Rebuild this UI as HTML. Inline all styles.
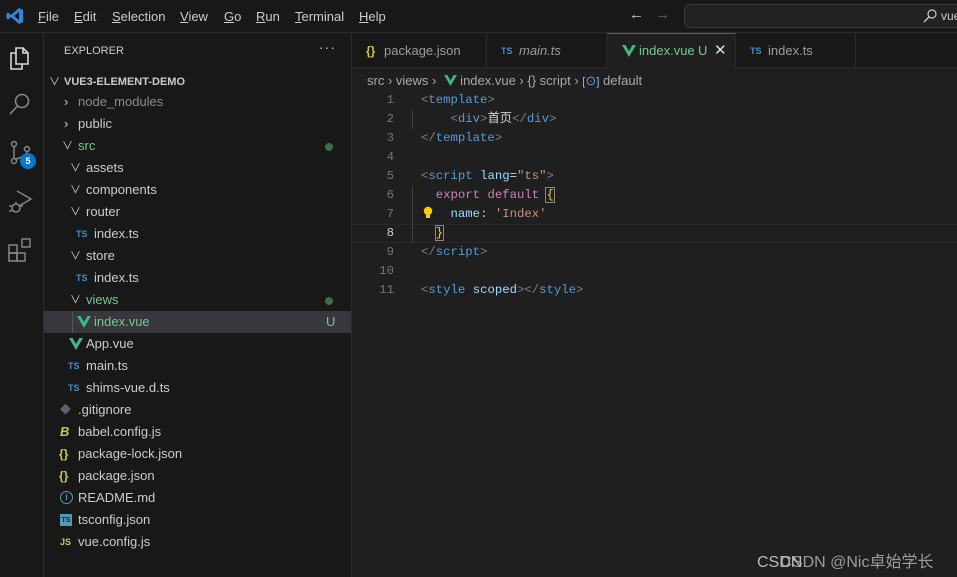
<!DOCTYPE html>
<html><head><meta charset="utf-8"><style>
*{margin:0;padding:0;box-sizing:border-box}
body{width:957px;height:577px;overflow:hidden;background:#1f1f1f;font-family:"Liberation Sans","Noto Sans CJK SC",sans-serif;color:#ccc;position:relative}
.abs{position:absolute}
#title{left:0;top:0;width:957px;height:33px;background:#181818;border-bottom:1px solid #2b2b2b}
.menu{top:9px;font-size:13px;color:#ccc}
#act{left:0;top:33px;width:44px;height:544px;background:#181818;border-right:1px solid #2b2b2b}
#side{left:44px;top:33px;width:308px;height:544px;background:#181818;border-right:1px solid #2b2b2b}
.row{position:absolute;left:0;width:307px;height:22px;font-size:13px;line-height:22px;color:#ccc;white-space:nowrap}
.row span,.row svg{position:absolute}
.chev{color:#ccc;font-size:11px}
.ts{color:#3b8fd0;font-weight:bold;font-size:9px;font-family:"Liberation Sans",sans-serif}
.g{color:#73c991}
#tabs{left:352px;top:33px;width:605px;height:35px;background:#181818;border-bottom:1px solid #2b2b2b}
.tab{position:absolute;top:0;height:35px;border-right:1px solid #2b2b2b;font-size:13px;line-height:36px;color:#9d9d9d}
.code{font-family:"Liberation Mono","Noto Sans CJK SC",monospace;font-size:12.3px;position:absolute;white-space:pre;height:19px;line-height:19px}
.ln{position:absolute;left:352px;width:42px;text-align:right;color:#6e7681;font-family:"Liberation Mono",monospace;font-size:12.3px;line-height:19px}
.t{color:#569cd6}.p{color:#808080}.a{color:#9cdcfe}.s{color:#ce9178}.k{color:#c586c0}.w{color:#d4d4d4}
</style></head><body>
<svg width="0" height="0" style="position:absolute"><defs><symbol id="vue" viewBox="0 0 14 12"><path d="M0 0 H3.5 L7 6 L10.5 0 H14 L7 12 Z" fill="#41b883"/><path d="M3.5 0 H5.5 L7 2.6 L8.5 0 H10.5 L7 6 Z" fill="#35495e" opacity=".0"/></symbol></defs></svg>
<div id="title" class="abs"></div>
<svg class="abs" style="left:6px;top:7px" width="18" height="18" viewBox="0 0 18 18"><path d="M13 1 L17 3 V15 L13 17 L5 10 L2 12.5 L0.5 11.5 V6.5 L2 5.5 L5 8 Z M13 5 L8 9 L13 13 Z" fill="#2a8ad8" fill-rule="evenodd"/></svg>
<div class="abs menu" style="left:38px"><u>F</u>ile</div>
<div class="abs menu" style="left:74px"><u>E</u>dit</div>
<div class="abs menu" style="left:112px"><u>S</u>election</div>
<div class="abs menu" style="left:180px"><u>V</u>iew</div>
<div class="abs menu" style="left:224px"><u>G</u>o</div>
<div class="abs menu" style="left:256px"><u>R</u>un</div>
<div class="abs menu" style="left:295px"><u>T</u>erminal</div>
<div class="abs menu" style="left:359px"><u>H</u>elp</div>
<div class="abs" style="left:629px;top:6px;font-size:15px;color:#ccc">&#8592;</div>
<div class="abs" style="left:655px;top:6px;font-size:15px;color:#666">&#8594;</div>
<div class="abs" style="left:684px;top:4px;width:280px;height:24px;background:#222;border:1px solid #3c3c3c;border-radius:6px"></div>
<svg class="abs" style="left:922px;top:8px" width="16" height="16" viewBox="0 0 16 16"><circle cx="10" cy="6" r="4" stroke="#ccc" stroke-width="1.2" fill="none"/><path d="M7 9 L2 14" stroke="#ccc" stroke-width="1.3"/></svg>
<div class="abs" style="left:941px;top:9px;font-size:12px;color:#ccc">vue</div>

<div id="act" class="abs"></div>
<svg class="abs" style="left:7px;top:45px" width="26" height="26" viewBox="0 0 26 26" fill="none" stroke="#d7d7d7" stroke-width="1.6"><path d="M9 3 H16 L21 8 V19 H9 Z"/><path d="M9 8 H4 V24 H15 V19"/><path d="M16 3 V8 H21"/></svg>
<svg class="abs" style="left:7px;top:91px" width="26" height="26" viewBox="0 0 26 26" fill="none" stroke="#868686" stroke-width="1.6"><circle cx="15" cy="10" r="6.5"/><path d="M10.5 15 L3 23"/></svg>
<svg class="abs" style="left:8px;top:140px" width="24" height="26" viewBox="0 0 24 26" fill="none" stroke="#868686" stroke-width="1.5"><circle cx="6" cy="4" r="2.5"/><circle cx="6" cy="21" r="2.5"/><circle cx="19" cy="9" r="2.5"/><path d="M6 6.5 V18.5 M19 11.5 Q19 16 8 19"/></svg>
<div class="abs" style="left:20px;top:153px;width:16px;height:16px;border-radius:8px;background:#0078d4;color:#fff;font-size:9px;font-weight:bold;text-align:center;line-height:16px">5</div>
<svg class="abs" style="left:7px;top:189px" width="26" height="26" viewBox="0 0 26 26" fill="none" stroke="#868686" stroke-width="1.5"><path d="M10 2 L24 10 L12 17"/><circle cx="9" cy="19" r="4"/><path d="M2 17 H5 M2 22 H5 M13 17 H16 M9 15 V13"/></svg>
<svg class="abs" style="left:7px;top:237px" width="26" height="26" viewBox="0 0 26 26" fill="none" stroke="#868686" stroke-width="1.5"><rect x="2" y="8" width="8" height="8"/><rect x="2" y="16" width="8" height="8"/><rect x="10" y="16" width="8" height="8"/><rect x="15" y="2" width="8" height="8"/></svg>

<div id="side" class="abs">
<div class="abs" style="left:20px;top:12px;font-size:11px;color:#ccc">EXPLORER</div>
<div class="abs" style="left:275px;top:6px;font-size:14px;color:#ccc;letter-spacing:1px">···</div>
<div class="row" style="top:38px"><span class="chev" style="left:5px">&#8744;</span><span style="left:20px;font-size:11px;font-weight:bold">VUE3-ELEMENT-DEMO</span></div>
<div class="row" style="top:58px"><span style="left:20px">&#8250;</span><span style="left:34px;color:#8c8c8c">node_modules</span></div>
<div class="row" style="top:80px"><span style="left:20px">&#8250;</span><span style="left:34px">public</span></div>
<div class="row" style="top:102px"><span class="chev" style="left:18px">&#8744;</span><span class="g" style="left:34px">src</span><span style="left:281px;top:8px;width:8px;height:8px;border-radius:4px;background:#3f6b45"></span></div>
<div class="row" style="top:124px"><span class="chev" style="left:26px">&#8744;</span><span style="left:42px">assets</span></div>
<div class="row" style="top:146px"><span class="chev" style="left:26px">&#8744;</span><span style="left:42px">components</span></div>
<div class="row" style="top:168px"><span class="chev" style="left:26px">&#8744;</span><span style="left:42px">router</span></div>
<div class="row" style="top:190px"><span class="ts" style="left:32px">TS</span><span style="left:50px">index.ts</span></div>
<div class="row" style="top:212px"><span class="chev" style="left:26px">&#8744;</span><span style="left:42px">store</span></div>
<div class="row" style="top:234px"><span class="ts" style="left:32px">TS</span><span style="left:50px">index.ts</span></div>
<div class="row" style="top:256px"><span class="chev" style="left:26px">&#8744;</span><span class="g" style="left:42px">views</span><span style="left:281px;top:8px;width:8px;height:8px;border-radius:4px;background:#3f6b45"></span></div>
<div class="row" style="top:278px;background:#37373d"><span style="left:28px;top:0;width:1px;height:22px;background:#585858"></span><svg style="left:33px;top:5px" width="14" height="12"><use href="#vue"/></svg><span class="g" style="left:50px">index.vue</span><span class="g" style="left:282px">U</span></div>
<div class="row" style="top:300px"><svg style="left:25px;top:5px" width="14" height="12"><use href="#vue"/></svg><span style="left:42px">App.vue</span></div>
<div class="row" style="top:322px"><span class="ts" style="left:24px">TS</span><span style="left:42px">main.ts</span></div>
<div class="row" style="top:344px"><span class="ts" style="left:24px">TS</span><span style="left:42px">shims-vue.d.ts</span></div>
<div class="row" style="top:366px"><span style="left:16px;color:#5a6470;font-size:11px">&#9670;</span><span style="left:34px">.gitignore</span></div>
<div class="row" style="top:388px"><span style="left:16px;color:#cbcb41;font-style:italic;font-weight:bold">B</span><span style="left:34px">babel.config.js</span></div>
<div class="row" style="top:410px"><span style="left:15px;color:#cbcb41;font-weight:bold;font-size:12px">{}</span><span style="left:34px">package-lock.json</span></div>
<div class="row" style="top:432px"><span style="left:15px;color:#cbcb41;font-weight:bold;font-size:12px">{}</span><span style="left:34px">package.json</span></div>
<div class="row" style="top:454px"><span style="left:16px;top:4px;width:13px;height:13px;border:1.3px solid #519aba;border-radius:7px;color:#519aba;font-size:9px;line-height:10px;text-align:center;font-weight:bold">i</span><span style="left:34px">README.md</span></div>
<div class="row" style="top:476px"><span style="left:16px;top:5px;width:12px;height:12px;background:#519aba;color:#1f1f1f;font-size:7px;line-height:13px;text-align:center;font-weight:bold">TS</span><span style="left:34px">tsconfig.json</span></div>
<div class="row" style="top:498px"><span style="left:16px;color:#cbcb41;font-weight:bold;font-size:9px">JS</span><span style="left:34px">vue.config.js</span></div>
</div>

<div id="tabs" class="abs">
<div class="tab" style="left:0;width:135px"><span style="position:absolute;left:14px;color:#cbcb41;font-weight:bold;font-size:12px">{}</span><span style="position:absolute;left:32px">package.json</span></div>
<div class="tab" style="left:135px;width:120px"><span class="ts" style="position:absolute;left:14px">TS</span><span style="position:absolute;left:32px;font-style:italic">main.ts</span></div>
<div class="tab" style="left:255px;width:129px;background:#1f1f1f;border-top:1px solid #0078d4;height:36px"><svg style="position:absolute;left:15px;top:11px" width="14" height="12"><use href="#vue"/></svg><span class="g" style="position:absolute;left:32px;top:-1px">index.vue</span><span class="g" style="position:absolute;left:91px;top:-1px">U</span><span style="position:absolute;left:107px;top:-1px;color:#ddd;font-size:15px">&#10005;</span></div>
<div class="tab" style="left:384px;width:120px"><span class="ts" style="position:absolute;left:14px">TS</span><span style="position:absolute;left:32px">index.ts</span></div>
</div>

<div class="abs" style="left:367px;top:73px;font-size:13px;color:#a9a9a9;white-space:nowrap">src &#8250; views &#8250; &nbsp;<svg width="13" height="11" style="vertical-align:-1px"><use href="#vue"/></svg> index.vue &#8250; {} script &#8250; <span style="color:#75beff;font-size:11px">[&#8857;]</span> default</div>

<div class="abs" style="left:352px;top:224px;width:605px;height:19px;border-top:1px solid #282828;border-bottom:1px solid #282828"></div>
<div class="abs" style="left:412px;top:110px;width:1px;height:19px;background:#404040"></div>
<div class="abs" style="left:412px;top:186px;width:1px;height:57px;background:#404040"></div>

<div class="ln" style="top:91px">1</div><div class="ln" style="top:110px">2</div><div class="ln" style="top:129px">3</div><div class="ln" style="top:148px">4</div><div class="ln" style="top:167px">5</div><div class="ln" style="top:186px">6</div><div class="ln" style="top:205px">7</div><div class="ln" style="top:224px;color:#ccc">8</div><div class="ln" style="top:243px">9</div><div class="ln" style="top:262px">10</div><div class="ln" style="top:281px">11</div>

<div class="code" style="left:421px;top:91px"><span class="p">&lt;</span><span class="t">template</span><span class="p">&gt;</span></div>
<div class="code" style="left:421px;top:110px">    <span class="p">&lt;</span><span class="t">div</span><span class="p">&gt;</span><span class="w">首页</span><span class="p">&lt;/</span><span class="t">div</span><span class="p">&gt;</span></div>
<div class="code" style="left:421px;top:129px"><span class="p">&lt;/</span><span class="t">template</span><span class="p">&gt;</span></div>
<div class="code" style="left:421px;top:167px"><span class="p">&lt;</span><span class="t">script</span> <span class="a">lang</span><span class="w">=</span><span class="s">"ts"</span><span class="p">&gt;</span></div>
<div class="code" style="left:421px;top:186px">  <span class="k">export</span> <span class="k">default</span> <span style="color:#ffd700;outline:1px solid #888">{</span></div>
<div class="code" style="left:421px;top:205px">    <span class="a">name</span><span class="w">:</span> <span class="s">'Index'</span></div>
<div class="code" style="left:421px;top:224px">  <span style="color:#ffd700;outline:1px solid #888">}</span></div>
<div class="code" style="left:421px;top:243px"><span class="p">&lt;/</span><span class="t">script</span><span class="p">&gt;</span></div>
<div class="code" style="left:421px;top:281px"><span class="p">&lt;</span><span class="t">style</span> <span class="a">scoped</span><span class="p">&gt;&lt;/</span><span class="t">style</span><span class="p">&gt;</span></div>
<svg class="abs" style="left:423px;top:206px" width="10" height="14" viewBox="0 0 10 14"><circle cx="5" cy="5" r="4.2" fill="#ffcc00"/><rect x="3" y="9" width="4" height="3" fill="#ffcc00"/></svg>

<div class="abs" style="left:757px;top:548px;font-size:16px;color:#bbb;white-space:nowrap">CSDN<span style="margin-left:-22px;opacity:.8">CSDN @Nic卓始学长</span></div>
</body></html>
